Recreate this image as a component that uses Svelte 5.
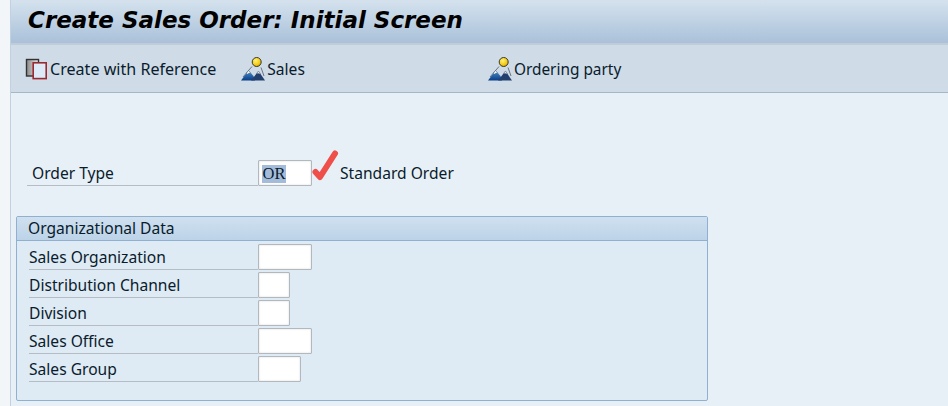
<script>
  const rows = [
    { label: 'Sales Organization', width: 54 },
    { label: 'Distribution Channel', width: 32 },
    { label: 'Division', width: 32 },
    { label: 'Sales Office', width: 54 },
    { label: 'Sales Group', width: 43 }
  ];
</script>

{#snippet person()}
  <svg class="icon" width="24" height="26" viewBox="0 0 24 26" aria-hidden="true">
    <defs>
      <radialGradient id="sun" cx="0.4" cy="0.35" r="0.7">
        <stop offset="0" stop-color="#fff27a" />
        <stop offset="0.7" stop-color="#f3c70c" />
        <stop offset="1" stop-color="#c99a00" />
      </radialGradient>
      <linearGradient id="mtn" x1="0" y1="0" x2="0" y2="1">
        <stop offset="0" stop-color="#4a90d0" />
        <stop offset="1" stop-color="#0a3c85" />
      </linearGradient>
    </defs>
    <path d="M2 21 L11 10.5 M20 11.5 L23 20" fill="none" stroke="#6b7480" stroke-width="1" />
    <circle cx="15.7" cy="6" r="4.5" fill="url(#sun)" stroke="#3a3a30" stroke-width="1" />
    <path d="M0 24.5 L7.5 14.5 L12.5 20 L14 24.5 Z" fill="url(#mtn)" />
    <path d="M10 24.5 L17.5 15 L24 24.5 Z" fill="#24406e" />
    <path d="M5.5 17.2 L7.5 14.5 L10 17.4 L8 17 L6.8 18.3 Z" fill="#fff" stroke="#33485f" stroke-width=".4" />
    <path d="M15.6 17.4 L17.5 15 L19.6 18 L17.5 17.6 Z" fill="#e4e8ee" stroke="#4a5a70" stroke-width=".4" />
  </svg>
{/snippet}

<div class="page">
  <header class="title">
    <h1>Create Sales Order: Initial Screen</h1>
  </header>

  <nav class="toolbar">
    <button class="tool ref">
      <svg class="icon" width="24" height="24" viewBox="0 0 24 24" aria-hidden="true">
        <defs>
          <linearGradient id="back" x1="0" y1="0" x2="1" y2="0">
            <stop offset="0" stop-color="#8b8b8b" />
            <stop offset="1" stop-color="#e4e4e4" />
          </linearGradient>
        </defs>
        <rect x="1.5" y="2.5" width="12" height="16.5" fill="url(#back)" stroke="#333" stroke-width="1.4" />
        <rect x="8.2" y="5.8" width="13" height="15.8" fill="#dcebf7" stroke="#9a2a30" stroke-width="1.6" />
      </svg>
      <span>Create with Reference</span>
    </button>
    <button class="tool sales">{@render person()}<span>Sales</span></button>
    <button class="tool party">{@render person()}<span>Ordering party</span></button>
  </nav>

  <main class="content">
    <div class="order">
      <span class="field-label">Order Type</span>
      <div class="input wide"><span class="selected">OR</span></div>
      <svg class="check" width="28" height="32" viewBox="0 0 28 32" aria-hidden="true">
        <path d="M4.5 22 L9 27 L24 3.5" fill="none" stroke="#ef4f4a" stroke-width="6" stroke-linecap="round" stroke-linejoin="round" />
      </svg>
      <span class="desc">Standard Order</span>
    </div>

    <section class="panel">
      <h2>Organizational Data</h2>
      <div class="rows">
        {#each rows as row}
          <div class="row">
            <span class="field-label">{row.label}</span>
            <div class="input" style="width: {row.width}px"></div>
          </div>
        {/each}
      </div>
    </section>
  </main>
</div>

<style>
  :global(body) {
    background: #f3f6f9;
    overflow: hidden;
  }
  .page {
    margin-left: 10px;
    height: 406px;
    display: flex;
    flex-direction: column;
    font-family: "Noto Sans", "Open Sans", sans-serif;
    font-size: 15.6px;
    color: #0a1b2c;
    border-left: 1px solid #c3d0dd;
    box-sizing: border-box;
  }
  .title {
    height: 45px;
    flex: none;
    box-sizing: border-box;
    padding-left: 17px;
    display: flex;
    align-items: center;
    background: linear-gradient(#d5e2ee, #a9c1d9);
    border-bottom: 2px solid #c0ccd8;
  }
  h1 {
    margin: 0 0 3px;
    font-family: "DejaVu Sans", sans-serif;
    font-size: 23px;
    font-weight: bold;
    font-style: italic;
    color: #000;
    white-space: nowrap;
  }
  .toolbar {
    height: 48px;
    flex: none;
    box-sizing: border-box;
    display: flex;
    align-items: center;
    background: #cfdce8;
    border-bottom: 1px solid #a5b6c8;
  }
  .tool {
    display: flex;
    align-items: center;
    padding: 0;
    border: 0;
    background: none;
    font: inherit;
    color: inherit;
    white-space: nowrap;
  }
  .ref {
    margin-left: 14px;
    font-size: 16.1px;
  }
  .ref .icon {
    margin-right: 1px;
  }
  .sales {
    margin-left: 25px;
  }
  .party {
    margin-left: 183px;
    font-size: 15.4px;
  }
  .party span {
    margin-top: 2px;
  }
  .sales .icon,
  .party .icon {
    margin-right: 2px;
  }
  .content {
    flex: 1;
    background: #e8f0f7;
    padding-left: 5px;
    min-height: 0;
  }
  .order {
    display: flex;
    align-items: flex-end;
    margin: 67px 0 0 11px;
    height: 26px;
  }
  .order .field-label {
    width: 231px;
    padding-left: 5px;
  }
  .field-label {
    display: block;
    height: 26px;
    line-height: 27px;
    box-sizing: border-box;
    border-bottom: 1px solid #b5bcc4;
    white-space: nowrap;
    flex: none;
  }
  .input {
    box-sizing: border-box;
    height: 26px;
    background: #fff;
    border: 1px solid #b3b8bd;
    border-radius: 1px;
    box-shadow: inset 0 0 2px #d0d4d8;
    flex: none;
  }
  .wide {
    width: 54px;
    padding: 4px 0 0 3px;
    font-family: "Liberation Serif", serif;
    font-size: 16.5px;
  }
  .selected {
    display: block;
    width: 24px;
    height: 18px;
    line-height: 18px;
    text-align: center;
    background: #a4bcd9;
  }
  .check {
    margin: -10px 0 0 -1px;
    align-self: flex-start;
    flex: none;
  }
  .desc {
    margin-left: 1px;
    line-height: 26px;
    flex: none;
  }
  .panel {
    margin-top: 30px;
    width: 692px;
    height: 185px;
    box-sizing: border-box;
    border: 1px solid #8fb0d0;
    border-radius: 2px;
    background: #deeaf4;
  }
  h2 {
    margin: 0;
    height: 24px;
    box-sizing: border-box;
    padding-left: 11px;
    font-size: inherit;
    font-weight: normal;
    line-height: 22px;
    background: linear-gradient(#cfe0ef, #bcd3e8);
    border-bottom: 1px solid #8fb0d0;
  }
  .rows {
    display: flex;
    flex-direction: column;
    gap: 2px;
    padding: 3px 0 0 12px;
  }
  .row {
    display: flex;
    align-items: flex-end;
    height: 26px;
  }
  .row .field-label {
    width: 229px;
  }
</style>
